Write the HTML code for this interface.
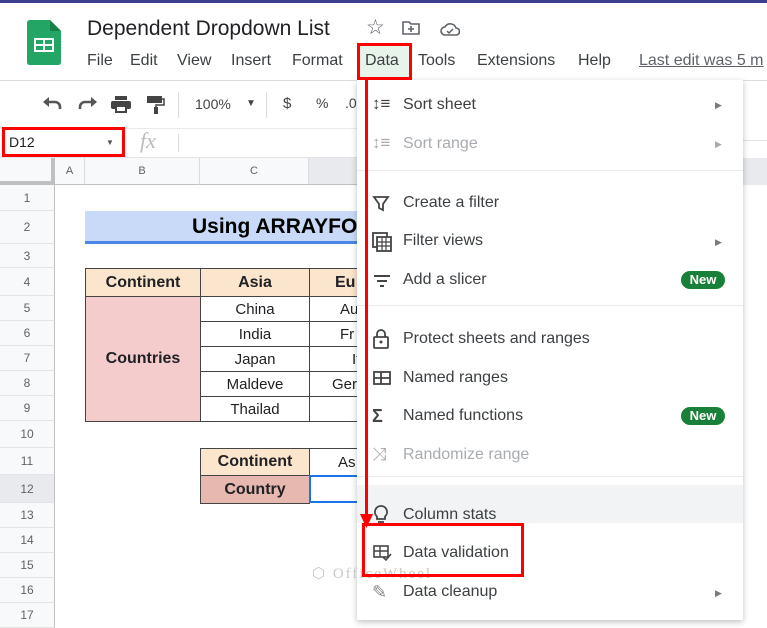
<!DOCTYPE html>
<html><head><meta charset="utf-8"><style>
*{margin:0;padding:0;box-sizing:border-box}
body{width:767px;height:616px;overflow:hidden;background:#fff;font-family:"Liberation Sans",Arial,sans-serif;position:relative;color:#202124}
.a{position:absolute}
.mb{font-size:16px;color:#3c4043;top:52px}
.rh{position:absolute;left:0;width:55px;text-align:center;font-size:12px;color:#5f6368;background:#f8f9fa;border-bottom:1px solid #e2e3e3;border-right:1px solid #c0c0c0}
.ch{position:absolute;top:158px;height:27px;font-size:11px;color:#5f6368;text-align:center;line-height:27px;background:#f8f9fa;border-right:1px solid #dadce0;border-bottom:1px solid #c0c0c0}
.c{position:absolute;border:1px solid #444;text-align:center;font-size:15px;display:flex;align-items:center;justify-content:center}
.b{font-weight:bold;font-size:16px}
.mi{position:absolute;left:403px;font-size:16px;color:#3c4043}
.dis{color:#a8abb0}
.arr{position:absolute;left:715px;font-size:9px;color:#7a7a7a}
.new{position:absolute;left:681px;width:44px;height:18px;border-radius:9px;background:#188038;color:#fff;font-size:13px;font-weight:bold;text-align:center;line-height:18px}
.sep{position:absolute;left:357px;width:386px;height:1px;background:#e8eaed}
.ic{position:absolute;left:372px}
</style></head><body>
<div class="a" style="left:0;top:0;width:767px;height:3px;background:#3b3f8f"></div>
<svg class="a" style="left:27px;top:20px" width="34" height="45" viewBox="0 0 34 45"><path d="M3 0H23L34 11V42Q34 45 31 45H3Q0 45 0 42V3Q0 0 3 0Z" fill="#23a566"/><path d="M23 0V11H34Z" fill="#178046"/><rect x="7" y="18" width="20" height="14" fill="#fff"/><rect x="9" y="20" width="7" height="4" fill="#23a566"/><rect x="18" y="20" width="7" height="4" fill="#23a566"/><rect x="9" y="26" width="7" height="4" fill="#23a566"/><rect x="18" y="26" width="7" height="4" fill="#23a566"/></svg>
<div class="a" style="left:87px;top:17px;font-size:21px;color:#202124">Dependent Dropdown List</div>
<div class="a" style="left:366px;top:15px;font-size:21px;color:#5f6368">☆</div>
<svg class="a" style="left:402px;top:21px" width="18" height="14"><path d="M1 1h6l2 2h8v10H1z" fill="none" stroke="#5f6368" stroke-width="1.6"/><path d="M9 5v6M6 8h6" stroke="#5f6368" stroke-width="1.6"/></svg>
<svg class="a" style="left:440px;top:22px" width="20" height="14"><path d="M5 13a4 4 0 0 1 0-8 6 6 0 0 1 11 1 3.5 3.5 0 0 1 0 7z" fill="none" stroke="#5f6368" stroke-width="1.6"/><path d="M7 9l2 2 4-4" fill="none" stroke="#5f6368" stroke-width="1.5"/></svg>
<div class="a mb" style="left:87px">File</div>
<div class="a mb" style="left:130px">Edit</div>
<div class="a mb" style="left:177px">View</div>
<div class="a mb" style="left:231px">Insert</div>
<div class="a mb" style="left:292px">Format</div>
<div class="a" style="left:359px;top:45px;width:51px;height:33px;background:#e6f4ea"></div>
<div class="a mb" style="left:365px">Data</div>
<div class="a mb" style="left:418px">Tools</div>
<div class="a mb" style="left:477px">Extensions</div>
<div class="a mb" style="left:578px">Help</div>
<div class="a mb" style="left:639px;color:#5f6368;text-decoration:underline;white-space:nowrap">Last edit was 5 m</div>
<div class="a" style="left:0;top:80px;width:767px;height:1px;background:#dadce0"></div>
<svg class="a" style="left:42px;top:96px" width="56" height="16"><path d="M4 6h9a5 5 0 0 1 5 5v2" fill="none" stroke="#555" stroke-width="2.6"/><path d="M1 6l6-5v10z" fill="#555"/><path d="M52 6h-9a5 5 0 0 0-5 5v2" fill="none" stroke="#555" stroke-width="2.6"/><path d="M55 6l-6-5v10z" fill="#555"/></svg>
<svg class="a" style="left:111px;top:96px" width="20" height="17"><rect x="4" y="0" width="12" height="4" fill="#444"/><rect x="0" y="5" width="20" height="8" rx="2" fill="#444"/><rect x="4" y="10" width="12" height="7" fill="#444"/><rect x="6" y="11" width="8" height="4" fill="#fff"/></svg>
<svg class="a" style="left:147px;top:96px" width="18" height="18"><rect x="0" y="0" width="15" height="7" fill="#444"/><path d="M15 3h2v6H9v3" fill="none" stroke="#444" stroke-width="1.5"/><rect x="7" y="11" width="4" height="7" fill="#444"/></svg>
<div class="a" style="left:178px;top:92px;width:1px;height:26px;background:#dadce0"></div>
<div class="a" style="left:195px;top:96px;font-size:14px;color:#444">100%</div>
<div class="a" style="left:246px;top:98px;font-size:10px;color:#444">▼</div>
<div class="a" style="left:266px;top:92px;width:1px;height:26px;background:#dadce0"></div>
<div class="a" style="left:283px;top:95px;font-size:15px;color:#444">$</div>
<div class="a" style="left:316px;top:95px;font-size:14px;color:#444">%</div>
<div class="a" style="left:345px;top:95px;font-size:14px;color:#444">.0</div>
<div class="a" style="left:0;top:128px;width:767px;height:1px;background:#e8eaed"></div>
<div class="a" style="left:2px;top:127px;width:123px;height:30px;border:3px solid #f00"></div>
<div class="a" style="left:9px;top:134px;font-size:14px">D12</div>
<div class="a" style="left:106px;top:138px;font-size:8px;color:#555">▼</div>
<div class="a" style="left:140px;top:128px;font-size:22px;font-style:italic;color:#bbb;font-family:'Liberation Serif',serif">fx</div>
<div class="a" style="left:178px;top:134px;width:1px;height:18px;background:#dadce0"></div>
<div class="a" style="left:0;top:157px;width:767px;height:1px;background:#e2e3e3"></div>
<div class="a" style="left:0;top:158px;width:55px;height:27px;background:#f8f9fa;border-right:4px solid #c0c0c0;border-bottom:4px solid #c0c0c0"></div>
<div class="ch" style="left:55px;width:30px">A</div>
<div class="ch" style="left:85px;width:115px">B</div>
<div class="ch" style="left:200px;width:109px">C</div>
<div class="ch" style="left:309px;width:458px;background:#e8eaed"></div>
<div class="rh" style="top:185px;height:26px;line-height:26px">1</div>
<div class="rh" style="top:211px;height:33px;line-height:33px">2</div>
<div class="rh" style="top:244px;height:24px;line-height:24px">3</div>
<div class="rh" style="top:268px;height:28px;line-height:28px">4</div>
<div class="rh" style="top:296px;height:25px;line-height:25px">5</div>
<div class="rh" style="top:321px;height:25px;line-height:25px">6</div>
<div class="rh" style="top:346px;height:25px;line-height:25px">7</div>
<div class="rh" style="top:371px;height:25px;line-height:25px">8</div>
<div class="rh" style="top:396px;height:25px;line-height:25px">9</div>
<div class="rh" style="top:421px;height:27px;line-height:27px">10</div>
<div class="rh" style="top:448px;height:27px;line-height:27px">11</div>
<div class="rh" style="top:475px;height:28px;line-height:28px;background:#e8eaed">12</div>
<div class="rh" style="top:503px;height:25px;line-height:25px">13</div>
<div class="rh" style="top:528px;height:25px;line-height:25px">14</div>
<div class="rh" style="top:553px;height:25px;line-height:25px">15</div>
<div class="rh" style="top:578px;height:25px;line-height:25px">16</div>
<div class="rh" style="top:603px;height:25px;line-height:25px">17</div>
<div class="a" style="left:85px;top:211px;width:272px;height:33px;background:#c9daf8;border-bottom:3px solid #4a86e8"></div>
<div class="a" style="left:192px;top:215px;font-size:21px;font-weight:bold;color:#000">Using ARRAYFO</div>
<div class="c b" style="left:85px;top:268px;width:116px;height:29px;background:#fce5cd">Continent</div>
<div class="c b" style="left:200px;top:268px;width:110px;height:29px;background:#fce5cd">Asia</div>
<div class="c b" style="left:309px;top:268px;width:60px;height:29px;background:#fce5cd;justify-content:flex-start;padding-left:25px">Eu</div>
<div class="c b" style="left:85px;top:296px;width:116px;height:126px;background:#f4cccc">Countries</div>
<div class="c" style="left:200px;top:296px;width:110px;height:26px">China</div>
<div class="c" style="left:200px;top:321px;width:110px;height:26px">India</div>
<div class="c" style="left:200px;top:346px;width:110px;height:26px">Japan</div>
<div class="c" style="left:200px;top:371px;width:110px;height:26px">Maldeve</div>
<div class="c" style="left:200px;top:396px;width:110px;height:26px">Thailad</div>
<div class="c" style="left:309px;top:296px;width:60px;height:26px;justify-content:flex-start;padding-left:30px">Au</div>
<div class="c" style="left:309px;top:321px;width:60px;height:26px;justify-content:flex-start;padding-left:30px">Fr</div>
<div class="c" style="left:309px;top:346px;width:60px;height:26px;justify-content:flex-start;padding-left:42px">It</div>
<div class="c" style="left:309px;top:371px;width:60px;height:26px;justify-content:flex-start;padding-left:22px">Ger</div>
<div class="c" style="left:309px;top:396px;width:60px;height:26px"></div>
<div class="c b" style="left:200px;top:448px;width:110px;height:28px;background:#fce5cd">Continent</div>
<div class="c" style="left:309px;top:448px;width:60px;height:28px;justify-content:flex-start;padding-left:28px">As</div>
<div class="c b" style="left:200px;top:475px;width:110px;height:29px;background:#e6b8af">Country</div>
<div class="a" style="left:309px;top:475px;width:60px;height:28px;border:2px solid #1a73e8"></div>
<div class="a" style="left:743px;top:81px;width:24px;height:535px;background:#fff"></div>
<div class="a" style="left:743px;top:140px;width:24px;height:1px;background:#e2e3e3"></div>
<div class="a" style="left:743px;top:158px;width:24px;height:27px;background:#e8eaed"></div>
<div class="a" style="left:357px;top:80px;width:386px;height:540px;background:#fff;box-shadow:0 2px 6px rgba(0,0,0,.25)"></div>
<div class="a" style="left:357px;top:485px;width:386px;height:38px;background:#f1f3f4"></div>
<div class="sep" style="top:170px"></div>
<div class="sep" style="top:305px"></div>
<div class="sep" style="top:476px"></div>
<div class="ic" style="top:94px;font-size:17px;color:#444">↕≡</div>
<div class="ic dis" style="top:133px;font-size:17px">↕≡</div>
<svg class="ic" style="top:194px" width="18" height="18"><path d="M2 3h14l-5 7v6l-4-2v-4z" fill="none" stroke="#444" stroke-width="1.8"/></svg>
<svg class="ic" style="top:232px" width="20" height="20"><rect x="1" y="1" width="14" height="14" fill="none" stroke="#444" stroke-width="1.8"/><rect x="5" y="5" width="14" height="14" fill="#fff" stroke="#444" stroke-width="1.8"/><path d="M5 10h14M5 14h14M10 5v14M14 5v14" stroke="#444" stroke-width="1.2"/></svg>
<svg class="ic" style="top:273px" width="20" height="16"><path d="M2 3h16M5 8h10M8 13h4" stroke="#444" stroke-width="2"/></svg>
<svg class="ic" style="top:329px" width="18" height="20"><rect x="2" y="8" width="14" height="11" rx="1" fill="none" stroke="#444" stroke-width="1.8"/><path d="M5 8V5a4 4 0 0 1 8 0v3" fill="none" stroke="#444" stroke-width="1.8"/><circle cx="9" cy="13" r="1.5" fill="#444"/></svg>
<svg class="ic" style="top:369px" width="20" height="18"><rect x="2" y="3" width="16" height="12" fill="none" stroke="#444" stroke-width="1.8"/><path d="M2 9h16M9 3v12" stroke="#444" stroke-width="1.8"/></svg>
<div class="ic" style="top:406px;font-size:18px;color:#444;font-weight:bold">Σ</div>
<div class="ic dis" style="top:444px;font-size:18px">⤨</div>
<svg class="ic" style="top:504px" width="18" height="22"><path d="M9 2a6 6 0 0 0-4 10.5V15h8v-2.5A6 6 0 0 0 9 2z" fill="none" stroke="#444" stroke-width="1.8"/><path d="M6 18h6" stroke="#444" stroke-width="1.8"/></svg>
<svg class="ic" style="top:544px" width="20" height="18"><rect x="2" y="2" width="14" height="11" fill="none" stroke="#444" stroke-width="1.6"/><path d="M2 7h14M8 2v11" stroke="#444" stroke-width="1.4"/><path d="M11 13l3 3 5-6" fill="none" stroke="#444" stroke-width="1.6"/></svg>
<div class="ic" style="top:582px;font-size:18px;color:#888">✎</div>
<div class="mi" style="top:96px">Sort sheet</div>
<div class="mi dis" style="top:135px">Sort range</div>
<div class="mi" style="top:194px">Create a filter</div>
<div class="mi" style="top:232px">Filter views</div>
<div class="mi" style="top:271px">Add a slicer</div>
<div class="mi" style="top:330px">Protect sheets and ranges</div>
<div class="mi" style="top:369px">Named ranges</div>
<div class="mi" style="top:407px">Named functions</div>
<div class="mi dis" style="top:446px">Randomize range</div>
<div class="mi" style="top:506px">Column stats</div>
<div class="mi" style="top:544px">Data validation</div>
<div class="mi" style="top:583px">Data cleanup</div>
<div class="arr" style="top:100px">▶</div>
<div class="arr" style="top:139px;color:#aaa">▶</div>
<div class="arr" style="top:237px">▶</div>
<div class="arr" style="top:588px">▶</div>
<div class="new" style="top:271px">New</div>
<div class="new" style="top:407px">New</div>
<div class="a" style="left:312px;top:564px;font-size:15px;color:#c8c8c8;letter-spacing:2px;font-family:'Liberation Serif',serif">⬡ OfficeWheel</div>
<div class="a" style="left:357px;top:43px;width:55px;height:37px;border:3px solid #f00"></div>
<div class="a" style="left:365px;top:79px;width:3px;height:438px;background:#f00"></div>
<svg class="a" style="left:360px;top:514px" width="13" height="14"><path d="M0 0h13L6.5 14z" fill="#f00"/></svg>
<div class="a" style="left:362px;top:523px;width:162px;height:54px;border:3px solid #f00"></div>
</body></html>
